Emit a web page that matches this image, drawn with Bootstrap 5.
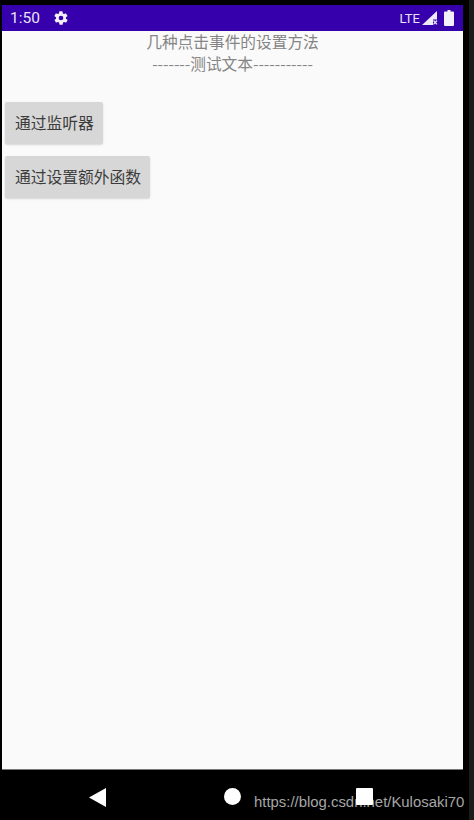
<!DOCTYPE html>
<html lang="zh">
<head>
<meta charset="utf-8">
<title>点击事件</title>
<link href="https://cdn.jsdelivr.net/npm/bootstrap@5.3.0/dist/css/bootstrap.min.css" rel="stylesheet">
<style>
html,body{height:820px;overflow:hidden;background:#000;}
body{font-family:"Noto Sans CJK SC","Liberation Sans",sans-serif;}
.frame{width:474px;height:820px;padding-top:5px;background:linear-gradient(to right,#000 469px,#1c1c1c 469px);}
.screen{width:461px;margin-left:2px;height:765px;background:#fafafa;border-bottom:1px solid #777;}
.sbar{height:26px;background:#3700ad;color:#e8e4f4;padding:0 9px 0 8px;font-family:Roboto,sans-serif;flex:none;}
.sclock{font-size:15.5px;width:43px;padding-top:2px;}
.slte{font-size:13px;margin-right:2px;padding-top:1px;}
.sbatt{margin-left:6px;}
.apptitle{font-size:15.7px;line-height:21.5px;color:#858585;}
.appbtn{background:#d7d7d7;color:#3c3c3c;font-size:15.75px;line-height:22px;padding:10px 9px 10px 10px;border:0;border-radius:2px;box-shadow:0 1px 2px rgba(0,0,0,.15);margin-left:3px;}
.appbtn:hover{background:#d7d7d7;color:#3c3c3c;}
.stack{gap:12px;padding-top:28px;}
.navzone{height:50px;}
.navzone svg{display:block;}
.navback{margin-left:89px;margin-top:18px;}
.navhome{margin-left:118px;margin-top:18px;}
.navrecent{margin-left:115px;margin-top:18px;position:relative;z-index:2;}
.mark-url{position:absolute;left:254px;top:793px;font-family:"Liberation Sans",sans-serif;font-size:14.9px;line-height:18px;color:#a6a6a6;white-space:nowrap;}
</style>
</head>
<body>
<div class="frame position-relative">
  <div class="screen d-flex flex-column">
    <div class="sbar d-flex align-items-center">
      <span class="sclock">1:50</span>
      <svg width="16" height="16" viewBox="0 0 24 24" fill="#f3f0fa" aria-hidden="true"><path d="M19.4 13a7.6 7.6 0 0 0 0-2l2.1-1.6a.5.5 0 0 0 .1-.6l-2-3.5a.5.5 0 0 0-.6-.2l-2.5 1a7.3 7.3 0 0 0-1.7-1l-.4-2.6a.5.5 0 0 0-.5-.5h-4a.5.5 0 0 0-.5.4l-.4 2.700a7.7 7.7 0 0 0-1.7 1l-2.5-1a.5.5 0 0 0-.6.2l-2 3.5a.5.5 0 0 0 .1.6L4.6 11a7.9 7.9 0 0 0 0 2l-2.1 1.6a.5.5 0 0 0-.1.6l2 3.5c.1.2.4.3.6.2l2.5-1c.5.4 1.1.7 1.700 1l.4 2.6c0 .3.2.5.5.5h4c.3 0 .5-.2.5-.4l.4-2.700c.6-.3 1.200-.6 1.700-1l2.500 1c.2.1.5 0 .6-.2l2-3.500a.5.5 0 0 0-.1-.6zM12 15.500a3.500 3.500 0 1 1 0-7 3.500 3.500 0 0 1 0 7z"/></svg>
      <span class="slte ms-auto">LTE</span>
      <svg width="16" height="14" viewBox="0 0 16 14" aria-hidden="true"><path fill="#eeeaf8" d="M0 14 15 0v8.500h-4V14z"/><path stroke="#eeeaf8" stroke-width="1.200" d="m11.500 9.500 3.500 3.800m0-3.800-3.500 3.800"/></svg>
      <svg class="sbatt" width="10" height="16" viewBox="0 0 10 16" aria-hidden="true"><path fill="#f3f0fa" d="M3.500 0h3v1.500H9a1 1 0 0 1 1 1V15a1 1 0 0 1-1 1H1a1 1 0 0 1-1-1V2.500a1 1 0 0 1 1-1h2.500z"/></svg>
    </div>
    <div class="apptitle text-center">几种点击事件的设置方法<br>-------测试文本-----------</div>
    <div class="stack d-flex flex-column align-items-start">
      <button type="button" class="btn appbtn">通过监听器</button>
      <button type="button" class="btn appbtn">通过设置额外函数</button>
    </div>
  </div>
  <div class="navzone d-flex align-items-start">
    <svg class="navback" width="17" height="19" viewBox="0 0 17 19" aria-hidden="true"><path fill="#fff" d="M17 0v19L0 9.500z"/></svg>
    <svg class="navhome" width="17" height="17" viewBox="0 0 17 17" aria-hidden="true"><circle cx="8.500" cy="8.500" r="8.500" fill="#fff"/></svg>
    <svg class="navrecent" width="17" height="17" viewBox="0 0 17 17" aria-hidden="true"><rect width="17" height="17" rx="1" fill="#fff"/></svg>
  </div>
  <span class="mark-url">https://blog.csdn.net/Kulosaki70</span>
</div>
<script src="https://cdn.jsdelivr.net/npm/bootstrap@5.3.0/dist/js/bootstrap.bundle.min.js"></script>
</body>
</html>
